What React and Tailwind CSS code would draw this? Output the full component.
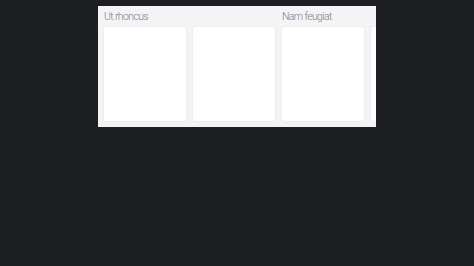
import React from "react";

const COLUMNS = [
  { title: "Ut rhoncus" },
  { title: "" },
  { title: "Nam feugiat" },
  { title: "" },
];

export default function App() {
  return (
    <div className="min-h-screen bg-[#1e1f22] pt-[6px] pl-[98px]" style={{ fontFamily: "Roboto, sans-serif" }}>
      {/* Board */}
      <div className="w-[278px] h-[121px] bg-[#f4f4f7] overflow-hidden flex gap-[7px] pl-[6px] pb-[6px]">
        {COLUMNS.map((col, i) => (
          <div key={i} className="w-[82px] shrink-0 flex flex-col">
            <div className="h-[21px] flex items-center text-[10.5px] tracking-[-0.06em] font-light text-[#7d7d82] whitespace-nowrap">
              {col.title}
            </div>
            <div className="flex-1 bg-white rounded-[2px] shadow-[0_0_2px_rgba(0,0,0,0.1)]" />
          </div>
        ))}
      </div>
    </div>
  );
}
